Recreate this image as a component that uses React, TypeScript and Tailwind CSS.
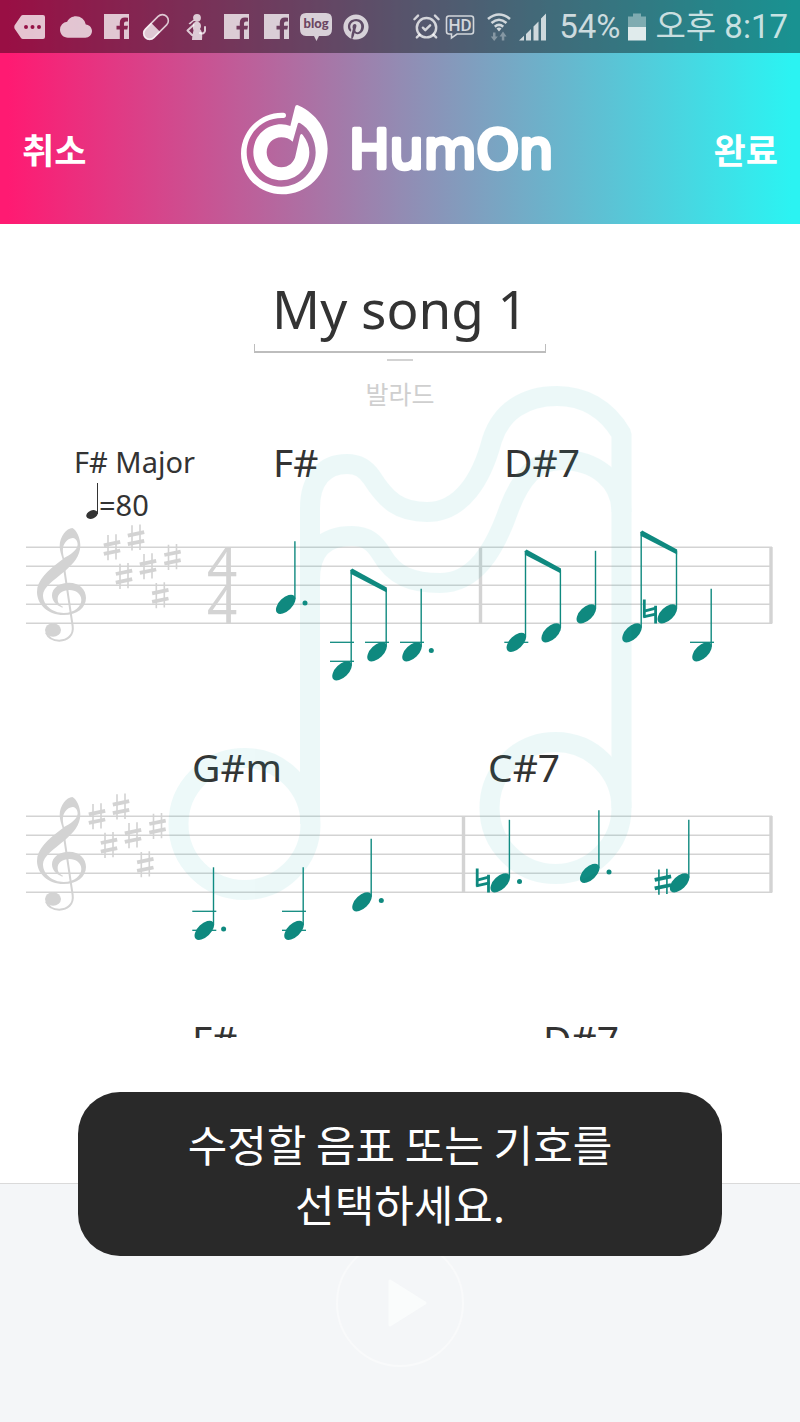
import { AlarmClockCheck } from "lucide-react";
import { FaPinterest } from "react-icons/fa";
import { MdCloud } from "react-icons/md";

type Accidental = "sharp" | "natural";

type NoteData = {
  x: number;
  step: number; // half spaces below the top line
  dot?: boolean;
  accidental?: Accidental;
  beamTo?: { x: number; step: number };
};

type Chord = { x: number; name: string };

type SystemProps = {
  chords: Chord[];
  chordY: number;
  notes: NoteData[];
  keyX: number;
  bars: number[];
  first?: boolean;
};

const STAFF_TOP = 117.3;
const STEM = 63;
const KEY_SHARPS = [
  [0, 0],
  [24, -9.7],
  [12, 28.7],
  [36, 19],
  [60.5, 9.7],
  [48.3, 48],
];

const noteY = (step: number) => STAFF_TOP + step * 9.5;

function Sharp({ x, y }: { x: number; y: number }) {
  return (
    <g transform={`translate(${x} ${y})`} stroke="currentColor" fill="none">
      <path d="M-4 -12.3V13M4 -13V12.3" strokeWidth="1.6" />
      <path d="M-8.2 -2L8.2 -5.4M-8.2 6.6L8.2 3.2" strokeWidth="3.8" />
    </g>
  );
}

function Natural({ x, y }: { x: number; y: number }) {
  return (
    <g transform={`translate(${x} ${y})`} stroke="currentColor" fill="none" strokeWidth="2.8">
      <path d="M-23 -14.2V3.8M-11.7 -8V9.6" />
      <path d="M-24 -2.4L-10.5 -5.9M-24 3L-10.5 0" />
    </g>
  );
}

function Note({ x, step, dot, accidental, beamTo }: NoteData) {
  const y = noteY(step);
  const top = beamTo ? noteY(beamTo.step) - STEM - 19 : y - STEM;
  const ledgers = [10, 12].filter((s) => s <= step);
  return (
    <g>
      {ledgers.map((s) => (
        <path key={s} d={`M${x - 12} ${noteY(s)}h24`} stroke="currentColor" strokeWidth="1.3" />
      ))}
      <ellipse cx={x} cy={y} rx="12" ry="6.5" fill="currentColor" transform={`rotate(-44 ${x} ${y})`} />
      <path d={`M${x + 9.2} ${y - 5}V${top}`} stroke="currentColor" strokeWidth="1.4" />
      {beamTo && (
        <path
          d={`M${x + 8.6} ${top + 0.4}l1.6 -1.8L${beamTo.x + 9.8} ${top + 17.6}v5L${x + 8.6} ${top + 4}z`}
          fill="currentColor"
        />
      )}
      {dot && <circle cx={x + 19.3} cy={y - 1.2} r="2.5" fill="currentColor" />}
      {accidental === "sharp" && <Sharp x={x - 16.7} y={y - 1} />}
      {accidental === "natural" && <Natural x={x} y={y} />}
    </g>
  );
}

function Clef() {
  return (
    <g transform="translate(20 90) scale(0.3333)">
      <path
        fill="currentColor"
        fillRule="evenodd"
        d="M127 263C108 256 96 243 96 226C96 204 119 188 147 188C178 188 198 208 198 234C198 264 171 285 131 285C84 285 51 254 51 216C51 180 82 153 128 118C124 104 119 92 119 78C119 50 140 24 157 24C170 30 181 55 181 76C181 108 160 132 136 152C100 182 69 202 69 226C69 256 98 279 131 279C165 279 184 258 184 240C184 222 168 210 148 210C128 210 113 222 113 236C113 250 120 256 129 260ZM132 114C129 100 128 94 129 84C132 66 146 54 159 54C168 55 173 64 173 74C172 90 150 105 132 114Z"
      />
      <path d="M132 142L158 318C162 346 142 362 118 362C98 362 84 352 78 338" fill="none" stroke="currentColor" strokeWidth="6" />
      <ellipse cx="99" cy="330" rx="24" ry="20" fill="currentColor" />
    </g>
  );
}

function System({ chords, chordY, notes, keyX, bars, first }: SystemProps) {
  return (
    <svg viewBox="0 0 800 269" className="block w-full shrink-0 font-['Noto_Sans',sans-serif]">
      {first && (
        <g fill="#333">
          <text x="74" y="43" fontSize="29">F# Major</text>
          <ellipse cx="92" cy="84.5" rx="6" ry="4.1" transform="rotate(-22 92 84.5)" />
          <path d="M97.5 53V84" stroke="#333" strokeWidth="1" />
          <text x="99" y="86" fontSize="29">=80</text>
        </g>
      )}
      {chords.map((c) => (
        <text key={c.x} x={c.x} y={chordY} fontSize="39" fill="#333">
          {c.name}
        </text>
      ))}
      <g className="text-[#d3d3d3]">
        {[0, 1, 2, 3, 4].map((i) => (
          <path key={i} d={`M26 ${STAFF_TOP + i * 19}H772`} stroke="currentColor" strokeWidth="1.4" />
        ))}
        <Clef />
        {KEY_SHARPS.map(([dx, dy]) => (
          <Sharp key={dx} x={keyX + dx} y={STAFF_TOP + dy} />
        ))}
        {first && (
          <g fill="currentColor" fontSize="53">
            <text x="207" y="155">4</text>
            <text x="207" y="193">4</text>
          </g>
        )}
        {bars.map((x) => (
          <path key={x} d={`M${x} 117V193.5`} stroke="currentColor" strokeWidth="3.4" />
        ))}
      </g>
      <g className="text-[#0f897f]">
        {notes.map((n) => (
          <Note key={n.x} {...n} />
        ))}
      </g>
    </svg>
  );
}

const systems: SystemProps[] = [
  {
    first: true,
    keyX: 112,
    chordY: 47,
    chords: [
      { x: 273, name: "F#" },
      { x: 504, name: "D#7" },
    ],
    bars: [229, 480.5, 771],
    notes: [
      { x: 285.7, step: 6, dot: true },
      { x: 342, step: 13, beamTo: { x: 377, step: 11 } },
      { x: 377, step: 11 },
      { x: 412, step: 11, dot: true },
      { x: 516.3, step: 10, beamTo: { x: 551.2, step: 9 } },
      { x: 551.2, step: 9 },
      { x: 586.3, step: 7 },
      { x: 632, step: 9, beamTo: { x: 667.3, step: 7 } },
      { x: 667.3, step: 7, accidental: "natural" },
      { x: 702, step: 11 },
    ],
  },
  {
    keyX: 97,
    chordY: 83,
    chords: [
      { x: 192, name: "G#m" },
      { x: 488, name: "C#7" },
    ],
    bars: [463.5, 771],
    notes: [
      { x: 204.3, step: 12, dot: true },
      { x: 294, step: 12 },
      { x: 362, step: 9, dot: true },
      { x: 500.2, step: 7, dot: true, accidental: "natural" },
      { x: 589.7, step: 6, dot: true },
      { x: 679.6, step: 7, accidental: "sharp" },
    ],
  },
  {
    keyX: 97,
    chordY: 86,
    chords: [
      { x: 192, name: "F#" },
      { x: 543, name: "D#7" },
    ],
    bars: [771],
    notes: [],
  },
];

const Watermark = () => (
  <svg viewBox="0 224 800 700" className="pointer-events-none absolute inset-x-0 top-0 w-full" aria-hidden="true">
    <g opacity="0.08" fill="none" stroke="#1cb4b4" strokeWidth="20">
      <circle cx="244.5" cy="824" r="66" />
      <circle cx="555.5" cy="808" r="66" />
      <path
        strokeLinejoin="bevel"
        d="M310 824V508C310 480 324 464 347 464C359 464 366 469 372 478C386 500 399 512 427 512C462 512 482 478 492 440C501 412 524 396 557 396C583 396 606 408 621.5 434V808"
      />
      <path d="M310 580C310 550 324 536 352 536C367 536 375 543 382 555C394 576 412 583 440 583C474 583 494 552 509 509C520 480 535 460 561 460C595 460 621.5 480 621.5 512" />
    </g>
  </svg>
);

const Bubble = () => (
  <svg viewBox="0 0 32 24" className="h-6 w-8">
    <path
      fill="currentColor"
      fillRule="evenodd"
      d="M9 0H29Q31 0 31 2V22Q31 24 29 24H9Q7.600 24 7 23L.5 13.500Q0 12 .5 10.500L7 1Q7.600 0 9 0ZM12 10a2 2 0 1 0 0 4a2 2 0 1 0 0-4ZM18.500 10a2 2 0 1 0 0 4a2 2 0 1 0 0-4ZM25 10a2 2 0 1 0 0 4a2 2 0 1 0 0-4Z"
    />
  </svg>
);

const Facebook = () => (
  <svg viewBox="0 0 25 25" className="size-[25px]">
    <path fill="currentColor" d="M0 0H25V25H20V15.500H23.300L24 11.800H20V9.500Q20 7.500 22 7.500H24V3.800Q22.800 3.500 21 3.500Q15.800 3.500 15.800 8.800V11.800H12.500V15.500H15.800V25H0Z" />
  </svg>
);

const Pill = () => (
  <svg viewBox="0 0 28 28" className="size-7">
    <g transform="rotate(-45 14 14)">
      <rect x="-1" y="8" width="30" height="12" rx="6" fill="none" stroke="currentColor" strokeWidth="1.6" />
      <path d="M13.500 7.500H5a6.500 6.500 0 0 0 0 13H13.500Z" fill="currentColor" />
    </g>
  </svg>
);

const Dancer = () => (
  <svg viewBox="0 0 22 28" className="h-7 w-[22px]">
    <g fill="currentColor">
      <circle cx="12" cy="4.800" r="3.900" />
      <path d="M10 7L5 11.500L3.500 10.500L8 7ZM8.500 10Q12 7 15 10Q17 13 15 16Q18 19 17 27H7Q7 22 8.500 17.500Q7 13 8.500 10Z" />
    </g>
    <path d="M8.500 12L2.500 17.500L7 22M15 20Q19 21.500 20 18V14" fill="none" stroke="currentColor" strokeWidth="2" strokeLinecap="round" strokeLinejoin="round" />
  </svg>
);

const Blog = () => (
  <svg viewBox="0 0 32 28" className="h-7 w-8">
    <path fill="currentColor" d="M6 0H26Q32 0 32 6V16Q32 23 26 23H19L16.500 28L14 23H6Q0 23 0 16V6Q0 0 6 0Z" />
    <text x="16" y="15" textAnchor="middle" fontSize="13" fontWeight="900" fill="#6c4663" className="font-['Lato',sans-serif]">
      blog
    </text>
  </svg>
);

const HdCall = () => (
  <svg viewBox="0 0 30 26" className="h-[26px] w-[30px]">
    <path
      d="M4 2H26Q28.500 2 28.500 4.500V17.500Q28.500 20 26 20H12L6.500 24V20H4Q1.500 20 1.500 17.500V4.500Q1.500 2 4 2Z"
      fill="none"
      stroke="currentColor"
      strokeWidth="1.6"
    />
    <text x="15" y="17" textAnchor="middle" fontSize="17" fontWeight="500" fill="currentColor" className="font-['Roboto',sans-serif]">
      HD
    </text>
  </svg>
);

const Wifi = () => (
  <svg viewBox="0 0 24 28" className="h-7 w-6">
    <g fill="none" stroke="currentColor" strokeWidth="2.6">
      <path d="M1 6Q12 -3 23 6" />
      <path d="M4.500 10Q12 3.500 19.500 10" />
      <path d="M7.800 13.700Q12 10 16.200 13.700" />
    </g>
    <path d="M9.500 15.500Q12 13.500 14.500 15.500L12 18.500Z" fill="currentColor" />
    <path d="M6 19.500H8.500V23.500H10.800L7.200 28L3.800 23.500H6ZM14.800 27.500H17.300V23.500H19.600L16 18.500L12.600 23.500H14.800Z" fill="currentColor" opacity="0.45" />
  </svg>
);

const Signal = () => (
  <svg viewBox="0 0 28 28" className="size-7">
    <path
      fill="currentColor"
      d="M0 27.500L5 22.800V27.500ZM7 21L12 16V27.500H7ZM14.500 13.500L19.500 8.500V27.500H14.500ZM22 5.500L27 .5V27.500H22Z"
    />
  </svg>
);

const Battery = () => (
  <svg viewBox="0 0 18 28" className="h-7 w-[18px]">
    <path d="M0 3.500H5V.5H13V3.500H18V14H0Z" fill="currentColor" opacity="0.5" />
    <path d="M0 14H18V27.500H0Z" fill="#fff" opacity="0.85" />
  </svg>
);

const StatusBar = () => (
  <div className="flex h-[53px] items-center justify-between bg-black/40 pr-3 pl-[14px] text-white/75">
    <div className="flex items-center gap-2 *:flex *:w-8 *:justify-center">
      <span className="mr-[6px]"><Bubble /></span>
      <span><MdCloud size={32} /></span>
      <span><Facebook /></span>
      <span><Pill /></span>
      <span><Dancer /></span>
      <span><Facebook /></span>
      <span><Facebook /></span>
      <span><Blog /></span>
      <span><FaPinterest size={26} /></span>
    </div>
    <div className="flex items-center gap-2 font-['Roboto','Noto_Sans_CJK_KR',sans-serif] text-[33px] leading-10 whitespace-nowrap">
      <AlarmClockCheck size={29} strokeWidth={2} className="-mr-1" />
      <HdCall />
      <span className="ml-1"><Wifi /></span>
      <Signal />
      <span className="ml-1">54%</span>
      <Battery />
      <span className="ml-px">오후 8:17</span>
    </div>
  </div>
);

const Logo = () => (
  <svg viewBox="0 0 320 94" className="h-[94px] w-[320px]" role="img" aria-label="HumOn">
    <path
      transform="scale(0.3333) translate(-723 -160)"
      fill="#fff"
      d="M853 205C795 202 743 248 743 308C743 365 789 411 847 411C904 411 950 365 950 308C950 270 930 236 904 221Q898 217 896 224L881 276C872 267 860 263 847 263C822 263 803 283 803 308C803 333 822 353 847 353C869 353 886 338 890 316L903 258Q906 249 912 257C924 272 931 290 931 308C931 355 893 392 847 392C800 392 763 355 763 308C763 261 800 224 847 224Q862 224 874 229L888 173Q890 163 900 168C952 192 986 240 986 297C986 375 925 434 848 434C780 434 726 380 726 312C726 243 785 186 853 189A8 8 0 0 1 853 205Z"
    />
    <text
      x="109"
      y="65"
      fontSize="54"
      fontWeight="400"
      fill="#fff"
      stroke="#fff"
      strokeWidth="4.400"
      strokeLinejoin="round"
      className="font-['DejaVu_Sans',sans-serif]"
    >
      HumOn
    </text>
  </svg>
);

const Header = () => (
  <header className="shrink-0 bg-[linear-gradient(90deg,#ff1a72_1%,#938bb3_50%,#2bf3f2_99%)] font-['Noto_Sans_CJK_KR',sans-serif]">
    <StatusBar />
    <div className="flex h-[171px] items-center justify-between px-[22px] pt-[22px] text-[35px] font-bold text-white">
      <button type="button">취소</button>
      <Logo />
      <button type="button">완료</button>
    </div>
  </header>
);

const App = () => {
  return (
    <div className="relative flex h-screen flex-col bg-white">
      <Header />
      <main className="relative mb-[145px] flex min-h-0 flex-1 flex-col items-center overflow-hidden pt-12">
        <input
          type="text"
          aria-label="Song title"
          defaultValue="My song 1"
          className="h-[72px] w-[292px] shrink-0 bg-transparent pt-[2px] text-center font-['Noto_Sans',sans-serif] text-[53px] text-[#333] outline-none"
        />
        <div className="h-[9px] w-[292px] shrink-0 border-x border-b-2 border-[#bdbdbd]" />
        <div className="mt-[6px] h-[2px] w-[26px] shrink-0 bg-[#d3d3d3]" />
        <p className="mt-[14px] mb-[19px] shrink-0 font-['Noto_Sans_CJK_KR',sans-serif] text-[25px] leading-9 text-[#cfcfcf]">발라드</p>
        {systems.map((s, i) => (
          <System key={i} {...s} />
        ))}
        <Watermark />
      </main>
      <footer className="flex h-[239px] shrink-0 items-center justify-center border-t border-[#dadada] bg-[#f4f6f8]">
        <button type="button" aria-label="Play" className="flex size-32 items-center justify-center rounded-full border-2 border-[#f9fafb]">
          <svg viewBox="0 0 40 50" className="ml-4 h-[50px] w-10">
            <path d="M2 3L37 25L2 47Z" fill="#fafcfc" stroke="#fafcfc" strokeWidth="3" strokeLinejoin="round" />
          </svg>
        </button>
      </footer>
      <div
        role="status"
        className="absolute inset-x-[78px] bottom-[166px] rounded-[42px] bg-[#292929] px-20 pt-[21px] pb-[23px] text-center font-['Noto_Sans_CJK_KR',sans-serif] text-[43px] leading-[60px] break-keep text-white"
      >
        수정할 음표 또는 기호를 선택하세요.
      </div>
    </div>
  );
};

export default App;
